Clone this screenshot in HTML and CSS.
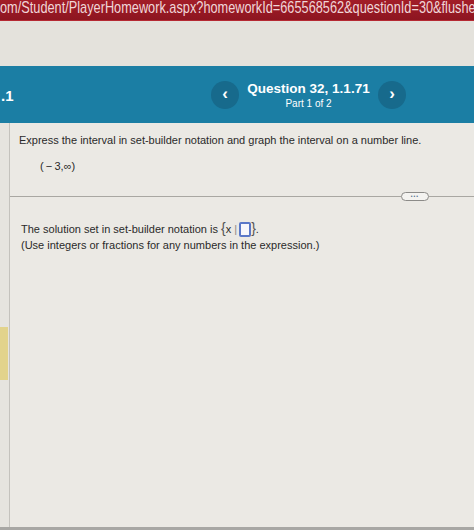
FILE: index.html
```html
<!DOCTYPE html>
<html>
<head>
<meta charset="utf-8">
<link rel="stylesheet" href="styles.css">
</head>
<body>
<div class="urlbar"><span class="url">om/Student/PlayerHomework.aspx?homeworkId=665568562&amp;questionId=30&amp;flushe</span></div>
<div class="grayband"></div>
<div class="header">
  <div class="section">.1</div>
  <div class="nav">
    <div class="circle">&#8249;</div>
    <div class="titles">
      <div class="title">Question 32, 1.1.71</div>
      <div class="part">Part 1 of 2</div>
    </div>
    <div class="circle">&#8250;</div>
  </div>
</div>
<div class="content">
  <div class="gutter"><div class="tab"></div></div>
  <div class="main">
    <p class="prompt">Express the interval in set-builder notation and graph the interval on a number line.</p>
    <p class="interval">(&#8201;&#8722;&#8201;3,&#8734;)</p>
    <div class="divider">
      <div class="rule"></div>
      <div class="pill">&#8226;&#8226;&#8226;</div>
      <div class="rule short"></div>
    </div>
    <p class="answer">The solution set in set-builder notation is <span class="brace">{</span>x <span class="bar">|</span> <span class="box"></span><span class="brace">}</span>.</p>
    <p class="hint">(Use integers or fractions for any numbers in the expression.)</p>
  </div>
</div>
<div class="bottom"></div>
</body>
</html>
```
FILE: styles.css
```css
* { box-sizing: border-box; }
html, body { margin: 0; padding: 0; }
body {
  width: 474px;
  height: 530px;
  overflow: hidden;
  font-family: "Liberation Sans", Arial, sans-serif;
  background: #ebe9e4;
  display: flex;
  flex-direction: column;
}
.urlbar {
  height: 21px;
  background: linear-gradient(#a21d28, #8d1520);
  border-bottom: 1px solid #b52a33;
  overflow: hidden;
  white-space: nowrap;
}
.url {
  display: block;
  margin-top: -1px;
  font-size: 17px;
  line-height: 18px;
  color: #f0d6d8;
  transform: scaleX(0.75);
  transform-origin: left center;
}
.grayband {
  height: 45px;
  background: #e4e2dc;
}
.header {
  height: 57px;
  background: #1b7ea4;
  display: flex;
  align-items: center;
  color: #fff;
}
.section {
  font-weight: bold;
  font-size: 15px;
  width: 211px;
  padding-left: 1px;
  padding-top: 2px;
}
.nav {
  display: flex;
  align-items: center;
}
.circle {
  width: 28px;
  height: 28px;
  border-radius: 50%;
  background: #176a8c;
  color: #fff;
  font-size: 17px;
  font-weight: bold;
  display: flex;
  align-items: center;
  justify-content: center;
  line-height: 1;
  padding-bottom: 3px;
}
.titles {
  width: 139px;
  text-align: center;
}
.title {
  font-weight: bold;
  font-size: 13.5px;
  line-height: 17px;
}
.part {
  font-size: 10px;
  line-height: 12px;
  margin-top: 1px;
}
.content {
  flex: 1;
  display: flex;
}
.gutter {
  width: 10px;
  background: #e6e4df;
  border-right: 1px solid #c4c2bd;
  padding-top: 204px;
}
.tab {
  width: 8px;
  height: 53px;
  background: #e2d38c;
}
.main {
  flex: 1;
  color: #2a2a2a;
  font-size: 11px;
}
p { margin: 0; }
.prompt {
  padding: 10px 0 0 9px;
  line-height: 15px;
}
.interval {
  padding: 11px 0 0 30px;
  line-height: 15px;
}
.divider {
  display: flex;
  align-items: center;
  margin-top: 18px;
}
.rule {
  flex: 1;
  height: 1px;
  background: #a9a7a2;
}
.rule.short { flex: 0 0 45px; }
.pill {
  width: 28px;
  height: 9px;
  border: 1px solid #8c8b88;
  border-radius: 5px;
  background: #f4f3f0;
  font-size: 5px;
  line-height: 7px;
  text-align: center;
  color: #55708a;
  letter-spacing: 1px;
}
.answer {
  padding: 20px 0 0 11px;
  line-height: 16px;
  height: 36px;
}
.brace { font-size: 14px; color: #555; line-height: 10px; }
.bar { color: #888; }
.box {
  display: inline-block;
  width: 12px;
  height: 15px;
  border: 2px solid #5a78c8;
  border-radius: 2px;
  vertical-align: -4px;
  background: #f7f7fb;
  margin-left: -1px;
}
.hint {
  padding: 1px 0 0 11px;
  line-height: 15px;
}
.bottom {
  height: 3px;
  background: #a8a7a4;
}
```
